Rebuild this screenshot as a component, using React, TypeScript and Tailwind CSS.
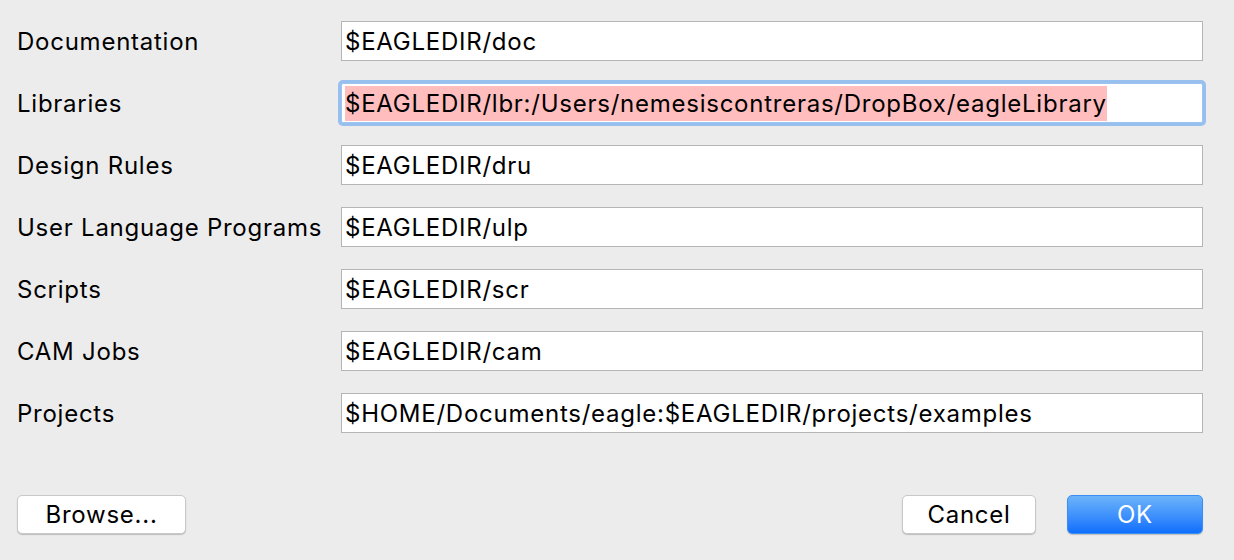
const rows: { label: string; value: string; focused?: boolean }[] = [
  { label: "Documentation", value: "$EAGLEDIR/doc" },
  { label: "Libraries", value: "$EAGLEDIR/lbr:/Users/nemesiscontreras/DropBox/eagleLibrary", focused: true },
  { label: "Design Rules", value: "$EAGLEDIR/dru" },
  { label: "User Language Programs", value: "$EAGLEDIR/ulp" },
  { label: "Scripts", value: "$EAGLEDIR/scr" },
  { label: "CAM Jobs", value: "$EAGLEDIR/cam" },
  { label: "Projects", value: "$HOME/Documents/eagle:$EAGLEDIR/projects/examples" },
];

export default function App() {
  return (
    <div
      className="w-[1234px] h-[560px] bg-[#ececec] text-black overflow-hidden"
      style={{ fontFamily: 'Inter, "Liberation Sans", Arial, sans-serif' }}
    >
      <div className="flex flex-col gap-[22px] pt-[21px] pl-[17px] pr-[31px]">
        {rows.map((row) => (
          <div key={row.label} className="flex items-center h-[40px]">
            <div className="w-[324px] text-[24px] tracking-[0.75px] leading-none pt-[2px]">{row.label}</div>
            <div
              className={
                row.focused
                  ? "flex-1 h-[40px] bg-white border border-[#9ec3ef] rounded-[2px] ring-[3px] ring-[#98c0ef] flex items-center pl-[3px]"
                  : "flex-1 h-[40px] bg-white border border-[#b5b5b5] flex items-center pl-[3px]"
              }
            >
              <span
                className={
                  row.focused
                    ? "bg-[#ffbdbd] text-[24px] tracking-[0.75px] leading-[35px] whitespace-nowrap"
                    : "text-[24px] tracking-[0.75px] leading-none whitespace-nowrap pt-[2px]"
                }
              >
                {row.value}
              </span>
            </div>
          </div>
        ))}
      </div>

      <div className="flex items-center pl-[17px] pr-[31px] mt-[62px]">
        <button
          type="button"
          className="w-[169px] h-[39px] bg-white rounded-[5px] border border-[#c8c8c8] shadow-[0_1px_1px_rgba(0,0,0,0.2)] text-[24px] tracking-[0.75px]"
        >
          Browse...
        </button>
        <div className="flex-1" />
        <button
          type="button"
          className="w-[134px] h-[39px] bg-white rounded-[5px] border border-[#c8c8c8] shadow-[0_1px_1px_rgba(0,0,0,0.2)] text-[24px] tracking-[0.75px]"
        >
          Cancel
        </button>
        <button
          type="button"
          className="ml-[31px] w-[136px] h-[39px] rounded-[5px] bg-gradient-to-b from-[#6cb3fa] to-[#0c6efd] border border-[#3a8ef5] shadow-[0_1px_1px_rgba(0,0,0,0.2)] text-white text-[24px] tracking-[0.75px]"
        >
          OK
        </button>
      </div>
    </div>
  );
}
